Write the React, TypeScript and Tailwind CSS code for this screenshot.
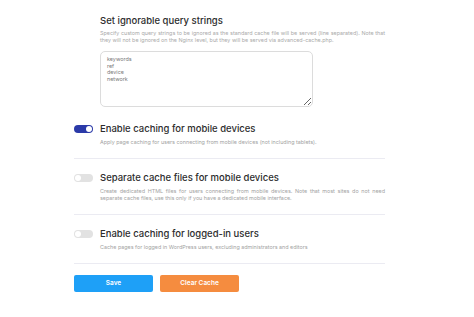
import React from 'react';

type Row = { title: string; desc: string; on: boolean };

const rows: Row[] = [
  {
    title: 'Enable caching for mobile devices',
    desc: 'Apply page caching for users connecting from mobile devices (not including tablets).',
    on: true,
  },
  {
    title: 'Separate cache files for mobile devices',
    desc: 'Create dedicated HTML files for users connecting from mobile devices. Note that most sites do not need separate cache files, use this only if you have a dedicated mobile interface.',
    on: false,
  },
  {
    title: 'Enable caching for logged-in users',
    desc: 'Cache pages for logged in WordPress users, excluding administrators and editors',
    on: false,
  },
];

function Toggle({ on }: { on: boolean }) {
  return (
    <div
      className={`mt-[3px] w-[19px] h-[8px] rounded-full flex items-center shrink-0 px-[1px] ${
        on ? 'bg-[#2b3aa8] justify-end' : 'bg-[#e2e2e2] justify-start'
      }`}
    >
      <div className="w-[6px] h-[6px] rounded-full bg-white" />
    </div>
  );
}

export default function App() {
  return (
    <div
      className="w-[474px] h-[317px] bg-white pl-[74px] pt-[14px] text-[#2d2d2d]"
      style={{ fontFamily: 'Inter, "Open Sans", sans-serif' }}
    >
      <div className="w-[311px]">
        {/* Query strings */}
        <div className="pl-[26px]">
          <h2 className="text-[9.5px] leading-[14px] font-medium">Set ignorable query strings</h2>
          <p className="mt-[2px] text-[5.4px] leading-[7px] text-[#aaaaaa] text-justify">
            Specify custom query strings to be ignored as the standard cache file will be served (line separated). Note that
            they will not be ignored on the Nginx level, but they will be served via advanced-cache.php.
          </p>
          <textarea
            className="mt-[7px] block w-[213px] h-[56px] border border-[#dcdcdc] rounded-[5px] px-[6px] pt-[4px] text-[5.4px] leading-[6.5px] text-[#777] outline-none resize-y"
            defaultValue={'keywords\nref\ndevice\nnetwork'}
          />
        </div>

        {/* Toggle rows */}
        {rows.map((r, i) => (
          <div key={r.title} className={`${i === 0 ? 'pt-[15px]' : 'pt-[12px]'} pb-[12px] border-b border-[#ebebf2]`}>
            <div className="flex gap-[7px] items-start">
              <Toggle on={r.on} />
              <div className="flex-1">
                <h3 className="text-[9.5px] leading-[14px] font-medium">{r.title}</h3>
                <p className="mt-[3px] text-[5.4px] leading-[7px] text-[#a3a3a3] text-justify">{r.desc}</p>
              </div>
            </div>
          </div>
        ))}

        {/* Buttons */}
        <div className="mt-[11px] flex gap-[7px]">
          <button className="w-[79px] h-[17px] rounded-[2px] bg-[#1ea0f7] text-white text-[6.5px] font-semibold">
            Save
          </button>
          <button className="w-[79px] h-[17px] rounded-[2px] bg-[#f58c3f] text-white text-[6.5px] font-semibold">
            Clear Cache
          </button>
        </div>
      </div>
    </div>
  );
}
